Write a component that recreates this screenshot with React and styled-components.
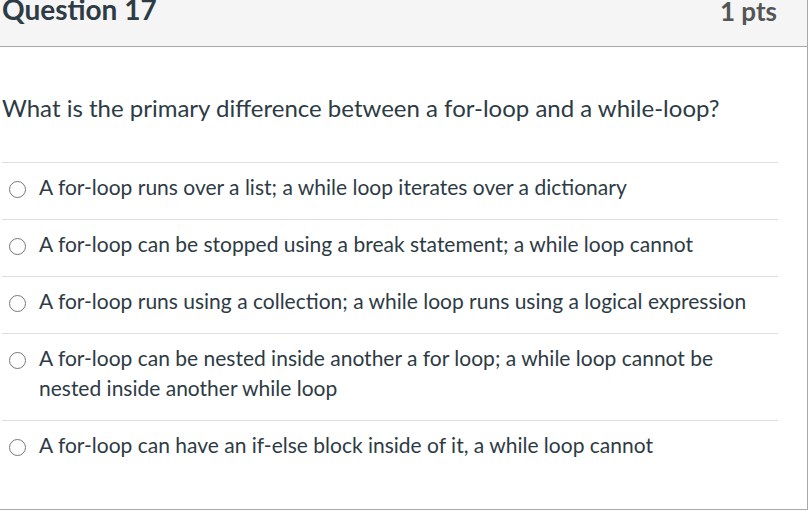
import styled, { createGlobalStyle } from "styled-components";

const GlobalStyle = createGlobalStyle`
  html, body {
    margin: 0;
    padding: 0;
    background: #ffffff;
  }
  body {
    font-family: Lato, "Open Sans", sans-serif;
    overflow: hidden;
  }
`;

const Card = styled.div`
  width: 807px;
  border-right: 1px solid #a9a9a9;
  border-bottom: 1px solid #a9a9a9;
  background: #ffffff;
`;

const Header = styled.div`
  height: 47px;
  box-sizing: border-box;
  display: flex;
  justify-content: space-between;
  align-items: flex-start;
  background: #f5f5f5;
  border-bottom: 1px solid #a9a9a9;
  padding: 0 30px 0 2px;
`;

const Title = styled.h2`
  margin: -6px 0 0;
  font-size: 28px;
  line-height: 30px;
  font-weight: 700;
  color: #2d3b45;
`;

const Points = styled.div`
  margin-top: -4px;
  font-size: 26px;
  line-height: 30px;
  font-weight: 700;
  color: #555555;
`;

const Body = styled.div`
  padding: 46px 0 32px 2px;
`;

const QuestionText = styled.p`
  margin: 0 0 39px 0;
  font-size: 24px;
  line-height: 30px;
  color: #2d3b45;
`;

const Answers = styled.div`
  width: 776px;
`;

const Answer = styled.label`
  display: flex;
  align-items: flex-start;
  gap: 13px;
  border-top: 1px solid #dedede;
  padding: 9px 0 17px 7px;
  cursor: pointer;
`;

const Radio = styled.span`
  flex: none;
  width: 17px;
  height: 17px;
  margin-top: 9px;
  box-sizing: border-box;
  border: 1.5px solid #777777;
  border-radius: 50%;
  background: #ffffff;
`;

const AnswerText = styled.span`
  flex: 1;
  font-size: 21px;
  line-height: 30px;
  color: #2d3b45;
`;

const answers = [
  "A for-loop runs over a list; a while loop iterates over a dictionary",
  "A for-loop can be stopped using a break statement; a while loop cannot",
  "A for-loop runs using a collection; a while loop runs using a logical expression",
  "A for-loop can be nested inside another a for loop; a while loop cannot be nested inside another while loop",
  "A for-loop can have an if-else block inside of it, a while loop cannot",
];

const App = () => {
  return (
    <>
      <GlobalStyle />
      <Card>
        <Header>
          <Title>Question 17</Title>
          <Points>1 pts</Points>
        </Header>
        <Body>
          <QuestionText>
            What is the primary difference between a for-loop and a while-loop?
          </QuestionText>
          <Answers>
            {answers.map((text) => (
              <Answer key={text}>
                <Radio />
                <AnswerText>{text}</AnswerText>
              </Answer>
            ))}
          </Answers>
        </Body>
      </Card>
    </>
  );
};

export default App;
